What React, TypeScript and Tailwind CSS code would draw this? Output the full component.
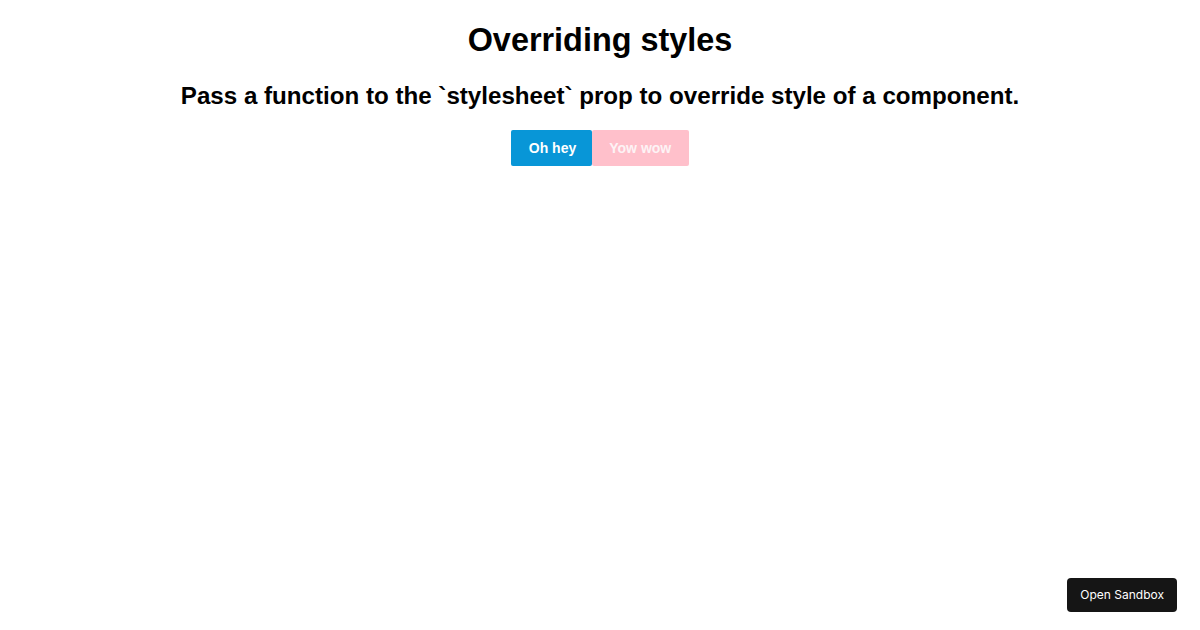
import React from "react";

const buttons = [
  { label: "Oh hey", className: "bg-[#0896d7] text-white pl-[18px] pr-[16px]" },
  { label: "Yow wow", className: "bg-[#ffc0cb] text-[#fdf3f5] pl-[17px] pr-[18px]" },
];

export default function App() {
  return (
    <div className="relative h-[630px] w-full bg-white font-['Liberation_Sans',Arial,sans-serif] text-black">
      <div className="flex flex-col items-center pt-[22px]">
        <h1 className="text-[32.4px] font-bold leading-[37px]">Overriding styles</h1>
        <h2 className="mt-[23px] text-[24.15px] font-bold leading-[28px]">
          Pass a function to the `stylesheet` prop to override style of a component.
        </h2>
        <div className="mt-[20px] flex">
          {buttons.map((b) => (
            <button
              key={b.label}
              className={`h-9 rounded-[2px] text-[14px] font-bold ${b.className}`}
            >
              {b.label}
            </button>
          ))}
        </div>
      </div>
      <button className="absolute bottom-[18px] right-[23px] h-[34px] rounded-[4px] bg-[#151515] px-[13px] font-['Inter',sans-serif] text-[12px] text-white">
        Open Sandbox
      </button>
    </div>
  );
}
